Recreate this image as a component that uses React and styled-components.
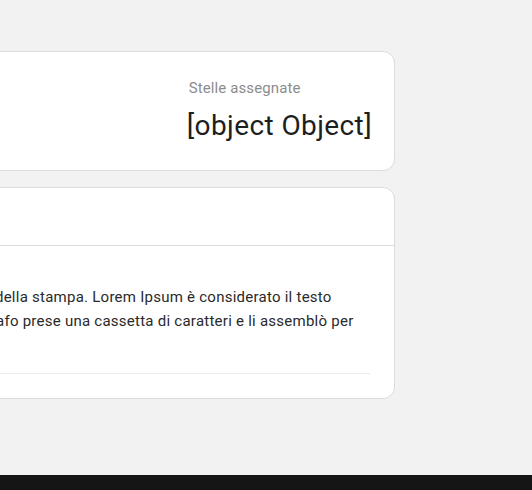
import React from 'react'
import styled, { createGlobalStyle } from 'styled-components'

const GlobalStyle = createGlobalStyle`
  html, body {
    margin: 0;
    padding: 0;
    background: #f2f2f2;
    overflow: hidden;
  }
  body {
    font-family: Roboto, 'Liberation Sans', sans-serif;
    color: #222;
  }
`

const Main = styled.main`
  display: flex;
  justify-content: flex-end;
  padding: 51px 137px 76px 0;
`

const Column = styled.div`
  flex: 0 0 940px;
  display: flex;
  flex-direction: column;
  gap: 16px;
`

const Card = styled.section`
  background: #fff;
  border: 1px solid #dcdcdc;
  border-radius: 12px;
`

const StatsRow = styled.div`
  display: flex;
  justify-content: flex-end;
  padding: 26px 22px 27px;
`

const Stat = styled.div`
  display: flex;
  flex-direction: column;
  align-items: flex-start;
  gap: 11px;
`

const StatLabel = styled.span`
  padding-left: 2px;
  font-size: 15px;
  line-height: 20px;
  color: #8c8c8c;
  letter-spacing: 0.1px;
`

const StatValue = styled.span`
  font-size: 28px;
  line-height: 34px;
  letter-spacing: 0.4px;
  color: #1e1e1e;
`

const CardHeader = styled.header`
  height: 57px;
  border-bottom: 1px solid #dcdcdc;
`

const CardBody = styled.div`
  padding: 39px 24px 24px 23px;
`

const Text = styled.p`
  margin: 0;
  font-size: 15px;
  line-height: 24px;
  letter-spacing: 0.25px;
  color: #2a2a2a;
  white-space: nowrap;
`

const Divider = styled.hr`
  margin: 16px 0 0;
  border: 0;
  border-top: 1px solid #ececec;
`

const Footer = styled.footer`
  height: 160px;
  background: #151515;
`

export default function App() {
  return (
    <>
      <GlobalStyle />
      <Main>
        <Column>
          <Card>
            <StatsRow>
              <Stat>
                <StatLabel>Stelle assegnate</StatLabel>
                <StatValue>[object Object]</StatValue>
              </Stat>
            </StatsRow>
          </Card>
          <Card>
            <CardHeader />
            <CardBody>
              <Text>
                Lorem Ipsum è un testo segnaposto utilizzato nel settore della tipografia e della stampa. Lorem Ipsum è considerato il testo
                <br />
                segnaposto standard sin dal sedicesimo secolo, quando un anonimo tipografo prese una cassetta di caratteri e li assemblò per
                <br />
                preparare un testo campione.
              </Text>
              <Divider />
            </CardBody>
          </Card>
        </Column>
      </Main>
      <Footer />
    </>
  )
}
